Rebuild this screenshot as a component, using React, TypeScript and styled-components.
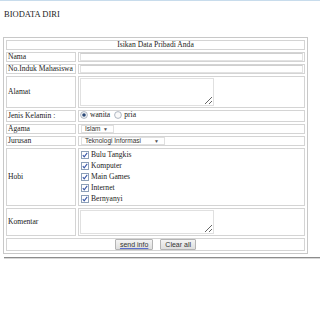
import React from 'react'
import styled, { createGlobalStyle } from 'styled-components'

const GlobalStyle = createGlobalStyle`
  html, body {
    margin: 0;
    padding: 0;
    background: #ffffff;
  }
  body {
    font-family: "Liberation Serif", "Times New Roman", serif;
    color: #222222;
  }
`

const Page = styled.div`
  width: 320px;
  height: 315px;
  border-top: 1px solid #c8dcec;
  box-sizing: border-box;
  overflow: hidden;
`

const Title = styled.div`
  font-size: 8.5px;
  line-height: 10px;
  padding: 8px 0 0 4px;
  height: 36px;
  box-sizing: border-box;
`

const FormTable = styled.table`
  margin-left: 3px;
  width: 305px;
  border: 1px solid #c8c8c8;
  border-spacing: 2px;
  font-size: 7.6px;
  line-height: 8px;
  table-layout: fixed;
`

const Cell = styled.td<{ $h?: number; $center?: boolean }>`
  border: 1px solid #d4d4d4;
  padding: 0 1px;
  height: ${p => p.$h ?? 8}px;
  text-align: ${p => (p.$center ? 'center' : 'left')};
  vertical-align: middle;
  white-space: nowrap;
  overflow: hidden;
`

const LabelCol = styled.col`
  width: 70px;
`

const TextInput = styled.input`
  display: block;
  width: 100%;
  height: 8px;
  margin: 0;
  padding: 0;
  border: 1px solid #e2e2e2;
  border-top-color: #cfcfcf;
  box-sizing: border-box;
  outline: none;
`

const TextArea = styled.textarea<{ $h: number }>`
  display: block;
  width: 134px;
  height: ${p => p.$h}px;
  margin: 1px 0;
  padding: 0;
  border: 1px solid #e0e0e0;
  box-sizing: border-box;
  resize: both;
  font-size: 7px;
`

const Choice = styled.span`
  display: inline-flex;
  align-items: center;
  gap: 2px;
  margin-right: 4px;
`

const SelectBox = styled.span<{ $w: number }>`
  display: inline-flex;
  align-items: center;
  justify-content: space-between;
  width: ${p => p.$w}px;
  height: 8px;
  padding: 0 5px 0 3px;
  box-sizing: border-box;
  border: 1px solid #e0e0e0;
  font-family: "Liberation Sans", Arial, sans-serif;
  font-size: 6.5px;
  color: #333;
  margin-left: 1px;
`

const Arrow = styled.span`
  font-size: 5px;
  color: #555;
`

const HobbyList = styled.div`
  display: flex;
  flex-direction: column;
`

const HobbyLine = styled.div`
  display: flex;
  align-items: center;
  gap: 2px;
  height: 11px;
  padding-left: 1px;
`

const ButtonRow = styled.div`
  display: flex;
  justify-content: center;
  gap: 7px;
`

const Button = styled.button<{ $focused?: boolean }>`
  height: 11px;
  padding: 0 4px;
  font-family: "Liberation Sans", Arial, sans-serif;
  font-size: 7px;
  line-height: 9px;
  color: #333;
  background: linear-gradient(#f4f4f4, #dedede);
  border: 1px solid #b4b4b4;
  border-radius: 1px;
  text-decoration: ${p => (p.$focused ? 'underline' : 'none')};
  text-decoration-color: #5a6fd0;
`

const Rule = styled.div`
  margin: 3px 0 0 4px;
  border-top: 1px solid #8c8c8c;
  border-bottom: 1px solid #d8d8d8;
`

const CheckIcon = () => (
  <svg width="8" height="8" viewBox="0 0 8 8">
    <rect x="0.5" y="0.5" width="7" height="7" fill="#fff" stroke="#8da0b8" />
    <path d="M1.8 4.2 L3.2 5.8 L6.2 1.8" fill="none" stroke="#3a58a8" strokeWidth="1.1" />
  </svg>
)

const RadioIcon = ({ on }: { on?: boolean }) => (
  <svg width="8" height="8" viewBox="0 0 8 8">
    <circle cx="4" cy="4" r="3.4" fill="#fafafa" stroke="#9aa6b4" strokeWidth="0.8" />
    {on && <circle cx="4" cy="4" r="1.8" fill="#2c4a78" />}
  </svg>
)

const hobbies = ['Bulu Tangkis', 'Komputer', 'Main Games', 'Internet', 'Bernyanyi']

export default function App() {
  return (
    <>
      <GlobalStyle />
      <Page>
        <Title>BIODATA DIRI</Title>
        <FormTable>
          <colgroup>
            <LabelCol />
            <col />
          </colgroup>
          <tbody>
            <tr>
              <Cell colSpan={2} $center>Isikan Data Pribadi Anda</Cell>
            </tr>
            <tr>
              <Cell>Nama</Cell>
              <Cell><TextInput /></Cell>
            </tr>
            <tr>
              <Cell>No.Induk Mahasiswa</Cell>
              <Cell><TextInput /></Cell>
            </tr>
            <tr>
              <Cell $h={30}>Alamat</Cell>
              <Cell $h={30}><TextArea $h={28} /></Cell>
            </tr>
            <tr>
              <Cell>Jenis Kelamin :</Cell>
              <Cell>
                <Choice><RadioIcon on />wanita</Choice>
                <Choice><RadioIcon />pria</Choice>
              </Cell>
            </tr>
            <tr>
              <Cell>Agama</Cell>
              <Cell>
                <SelectBox $w={33}>Islam<Arrow>▼</Arrow></SelectBox>
              </Cell>
            </tr>
            <tr>
              <Cell>Jurusan</Cell>
              <Cell>
                <SelectBox $w={84}>Teknologi Informasi<Arrow>▼</Arrow></SelectBox>
              </Cell>
            </tr>
            <tr>
              <Cell $h={56}>Hobi</Cell>
              <Cell $h={56}>
                <HobbyList>
                  {hobbies.map(h => (
                    <HobbyLine key={h}><CheckIcon />{h}</HobbyLine>
                  ))}
                </HobbyList>
              </Cell>
            </tr>
            <tr>
              <Cell $h={26}>Komentar</Cell>
              <Cell $h={26}><TextArea $h={24} /></Cell>
            </tr>
            <tr>
              <Cell colSpan={2} $h={11}>
                <ButtonRow>
                  <Button $focused>send info</Button>
                  <Button>Clear all</Button>
                </ButtonRow>
              </Cell>
            </tr>
          </tbody>
        </FormTable>
        <Rule />
      </Page>
    </>
  )
}
